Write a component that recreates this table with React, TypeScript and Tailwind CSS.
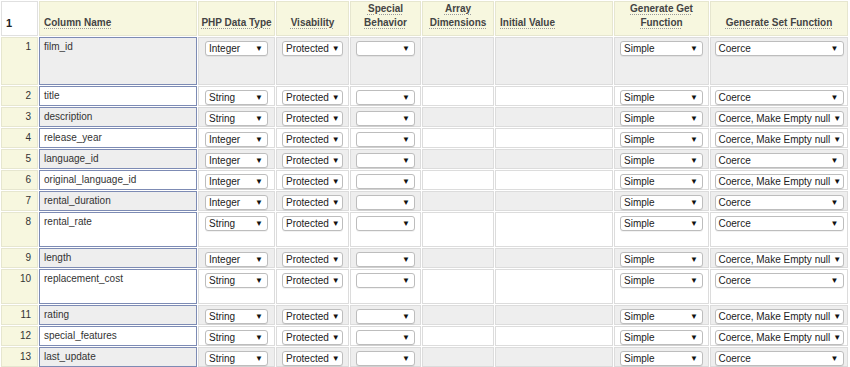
const rows = [
  { n: 1, name: "film_id", type: "Integer", set: "Coerce", h: "h-[48px]" },
  { n: 2, name: "title", type: "String", set: "Coerce", h: "h-[20px]" },
  { n: 3, name: "description", type: "String", set: "Coerce, Make Empty null", h: "h-[20px]" },
  { n: 4, name: "release_year", type: "Integer", set: "Coerce, Make Empty null", h: "h-[20px]" },
  { n: 5, name: "language_id", type: "Integer", set: "Coerce", h: "h-[20px]" },
  { n: 6, name: "original_language_id", type: "Integer", set: "Coerce, Make Empty null", h: "h-[20px]" },
  { n: 7, name: "rental_duration", type: "Integer", set: "Coerce", h: "h-[20px]" },
  { n: 8, name: "rental_rate", type: "String", set: "Coerce", h: "h-[35px]" },
  { n: 9, name: "length", type: "Integer", set: "Coerce, Make Empty null", h: "h-[20px]" },
  { n: 10, name: "replacement_cost", type: "String", set: "Coerce", h: "h-[35px]" },
  { n: 11, name: "rating", type: "String", set: "Coerce, Make Empty null", h: "h-[20px]" },
  { n: 12, name: "special_features", type: "String", set: "Coerce, Make Empty null", h: "h-[20px]" },
  { n: 13, name: "last_update", type: "String", set: "Coerce", h: "h-[20px]" },
];

const Select = ({ value, width }: { value: string; width: string }) => (
  <div
    className={`${width} h-[15px] mt-[3px] flex items-center justify-between pl-[3px] pr-[4px] bg-white border border-[#bdbdbd] rounded-[3px] shadow-[0_1px_0_rgba(0,0,0,0.05)] text-[#222] leading-none`}
  >
    <span className="whitespace-nowrap">{value}</span>
    <span className="text-[8px] text-[#111] pl-[3px]">▼</span>
  </div>
);

const Head = ({ children, left }: { children: React.ReactNode; left?: boolean }) => (
  <div
    className={`h-[35px] bg-[#f7f7df] border border-[#e6e6cf] flex flex-col justify-end pb-[5px] font-bold text-[#444] leading-[14px] ${
      left ? "items-start pl-[4px]" : "items-center text-center"
    }`}
  >
    {children}
  </div>
);

const Dot = ({ children }: { children: React.ReactNode }) => (
  <span className="underline decoration-dotted decoration-[#999] underline-offset-2">{children}</span>
);

export default function App() {
  return (
    <div className="w-[850px] h-[367px] bg-white overflow-hidden font-['Liberation_Sans',Arial,sans-serif] text-[10px] text-[#333]">
      <div className="grid grid-cols-[37px_158px_77px_73px_71px_72px_118px_95px_138px] gap-px p-px">
        <div className="h-[35px] bg-white border border-[#e0e0e0] flex items-end pb-[5px] pl-[4px] font-bold text-[#222] leading-[14px] text-[11px]">
          1
        </div>
        <Head left>
          <Dot>Column Name</Dot>
        </Head>
        <Head>
          <Dot>PHP Data Type</Dot>
        </Head>
        <Head>
          <Dot>Visability</Dot>
        </Head>
        <Head>
          <Dot>Special</Dot>
          <Dot>Behavior</Dot>
        </Head>
        <Head>
          <Dot>Array</Dot>
          <Dot>Dimensions</Dot>
        </Head>
        <Head left>
          <Dot>Initial Value</Dot>
        </Head>
        <Head>
          <Dot>Generate Get</Dot>
          <Dot>Function</Dot>
        </Head>
        <Head>
          <Dot>Generate Set Function</Dot>
        </Head>

        {rows.map((r) => {
          const bg = r.n % 2 === 1 ? "bg-[#eeeeee]" : "bg-white";
          const cell = `${r.h} ${bg} border border-[#dcdcdc] flex justify-center`;
          return (
            <div key={r.n} className="contents">
              <div className={`${r.h} bg-[#f7f7df] border border-[#e6e6cf] text-right pr-[6px] pt-[3px] leading-[12px]`}>
                {r.n}
              </div>
              <div className={`${r.h} ${bg} border border-[#7d8bb4] pl-[4px] pt-[3px] leading-[12px]`}>{r.name}</div>
              <div className={cell}>
                <Select value={r.type} width="w-[63px]" />
              </div>
              <div className={cell}>
                <Select value="Protected" width="w-[61px]" />
              </div>
              <div className={cell}>
                <Select value="" width="w-[59px]" />
              </div>
              <div className={cell} />
              <div className={cell} />
              <div className={cell}>
                <Select value="Simple" width="w-[83px]" />
              </div>
              <div className={cell}>
                <Select value={r.set} width="w-[129px]" />
              </div>
            </div>
          );
        })}
      </div>
    </div>
  );
}
